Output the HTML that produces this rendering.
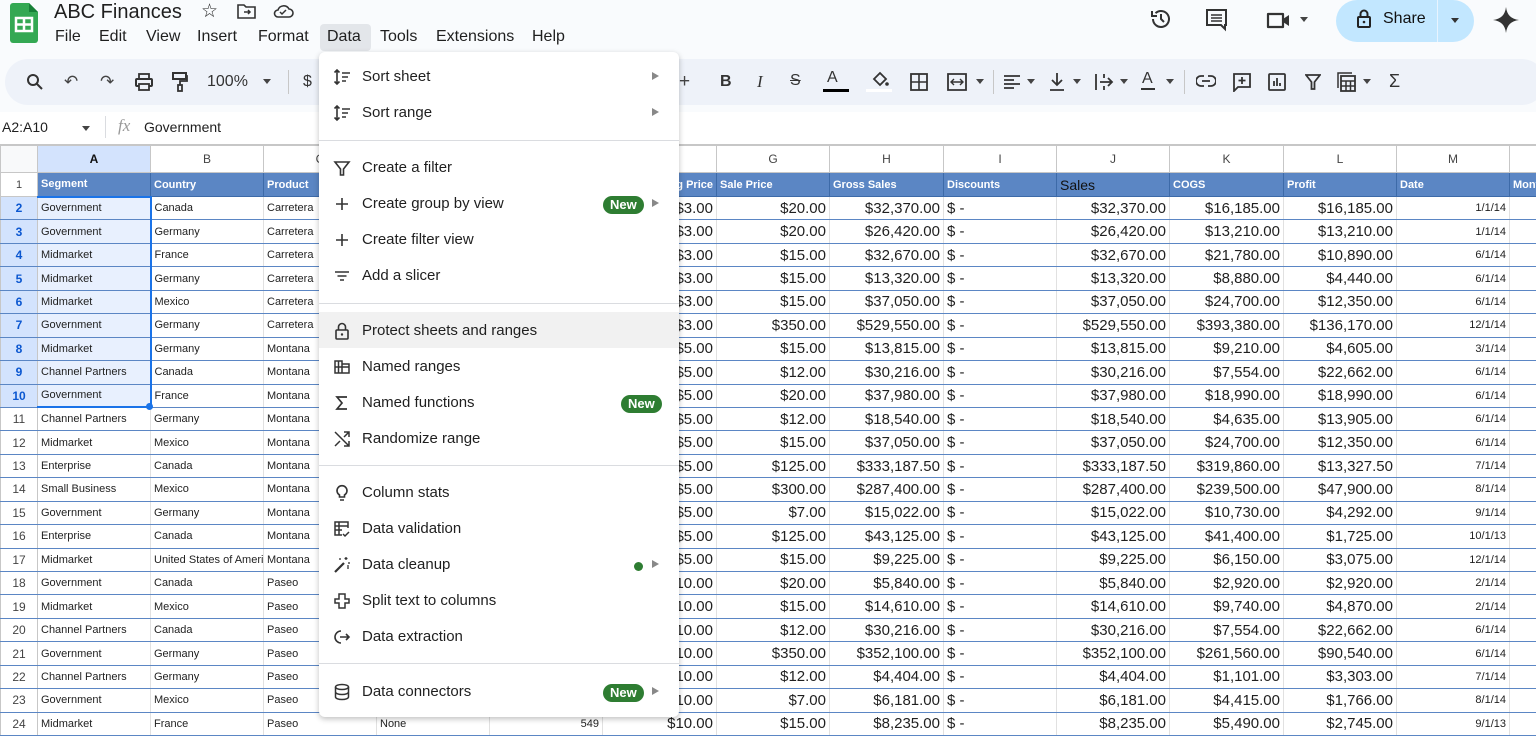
<!DOCTYPE html>
<html><head><meta charset="utf-8">
<style>
*{box-sizing:border-box;margin:0;padding:0}
body{width:1536px;height:730px;overflow:hidden;background:#f9fbfd;font-family:"Liberation Sans",Arial,sans-serif;color:#1f1f1f;position:relative}
.abs{position:absolute}
.tb{position:absolute;left:5px;top:59px;width:1540px;height:46px;background:#eef2f9;border-radius:23px}
.ic{position:absolute;font-size:17px;color:#444}
table{position:absolute;left:0;top:145px;width:1559px;border-collapse:collapse;table-layout:fixed;background:#fff}
td{border:1px solid #e1e1e1;height:23.45px;padding:0 3px;font-size:11px;white-space:nowrap;overflow:hidden}
tr.h td{height:27px;background:#fff;color:#444;text-align:center;font-size:12px;border-color:#c7c7c7}
tr.r1 td{height:24px;background:#5b86c4;color:#fff;font-weight:bold;font-size:11px;border-color:#3d6aa8}
tr.r1 td:first-child{background:#fff;color:#444;font-weight:normal;border-color:#c7c7c7}
td:first-child{text-align:center;color:#444;font-size:12px;background:#fff;border-color:#c7c7c7}
td.n{text-align:right;font-size:15px}
td.d{text-align:right}
tr.s td:first-child{background:#d3e3fd;font-weight:bold;color:#0b57d0}
tr.s td:nth-child(2){background:#e8f0fe;border-left:1px solid #1a73e8;border-right:2px solid #1a73e8}
tr.b td{border-bottom:1px solid #5b86c4}
#m{position:absolute;left:319px;top:52px;width:360px;height:665px;background:#fff;border-radius:6px;box-shadow:0 2px 6px rgba(0,0,0,.25)}
.it{position:absolute;left:0;width:360px;height:36px;font-size:15px;color:#1f1f1f}
.it .t{position:absolute;left:43px;top:10px}
.it .i{position:absolute;left:14px;top:10px;width:18px;height:18px}
.ar{position:absolute;left:333px;top:14px;width:0;height:0;border-left:7px solid #888;border-top:4.5px solid transparent;border-bottom:4.5px solid transparent}
.new{position:absolute;top:11px;height:18px;padding:0 7px;background:#2e7d32;color:#fff;font-weight:bold;font-size:13px;border-radius:9px;line-height:18px}
.sep{position:absolute;left:0;width:360px;height:1px;background:#dadce0}
</style></head><body>
<svg class="abs" style="left:10px;top:3px" width="28" height="40" viewBox="0 0 28 40"><path d="M3 0h16l9 9v28a3 3 0 0 1-3 3H3a3 3 0 0 1-3-3V3a3 3 0 0 1 3-3z" fill="#34a853"/><path d="M19 0v9h9z" fill="#188038"/><rect x="6" y="15" width="16" height="13" fill="none" stroke="#fff" stroke-width="2.5"/><path d="M6 21.5h16M14 15v13" stroke="#fff" stroke-width="2.5"/></svg>
<div class="abs" style="left:54px;top:1px;font-size:20px">ABC Finances</div>
<div class="abs" style="left:201px;top:0px;font-size:19px">☆</div>
<svg class="abs" style="left:237px;top:3px" width="20" height="16" viewBox="0 0 20 16"><path d="M1 2h6l2 2h9v11H1z" fill="none" stroke="#333" stroke-width="1.6"/><path d="M7 9h6M11 7l2 2-2 2" fill="none" stroke="#333" stroke-width="1.5"/></svg>
<svg class="abs" style="left:272px;top:3px" width="22" height="16" viewBox="0 0 22 16"><path d="M6 14h11a4 4 0 0 0 0-8 6 6 0 0 0-11 1 3.5 3.5 0 0 0 0 7z" fill="none" stroke="#333" stroke-width="1.6"/><path d="M8 9l2 2 4-4" fill="none" stroke="#333" stroke-width="1.5"/></svg>
<div class="abs" style="left:320px;top:24px;width:51px;height:27px;background:#e3e6ea;border-radius:4px"></div>
<div class="abs" style="top:28px;font-size:16px;left:55px">File</div>
<div class="abs" style="top:28px;font-size:16px;left:99px">Edit</div>
<div class="abs" style="top:28px;font-size:16px;left:146px">View</div>
<div class="abs" style="top:28px;font-size:16px;left:197px">Insert</div>
<div class="abs" style="top:28px;font-size:16px;left:258px">Format</div>
<div class="abs" style="top:28px;font-size:16px;left:327px">Data</div>
<div class="abs" style="top:28px;font-size:16px;left:380px">Tools</div>
<div class="abs" style="top:28px;font-size:16px;left:436px">Extensions</div>
<div class="abs" style="top:28px;font-size:16px;left:532px">Help</div>
<svg class="abs" style="left:1149px;top:7px" width="24" height="24" viewBox="0 0 24 24"><path d="M4 12a8 8 0 1 0 2.5-5.8" fill="none" stroke="#333" stroke-width="2"/><path d="M3 4v5h5" fill="none" stroke="#333" stroke-width="2"/><path d="M12 7v5l3 3" fill="none" stroke="#333" stroke-width="2"/></svg>
<svg class="abs" style="left:1205px;top:8px" width="24" height="24" viewBox="0 0 24 24"><path d="M2 2h19v15h-1v4l-4-4H2z" fill="none" stroke="#333" stroke-width="2"/><path d="M6 7h11M6 10h11M6 13h11" stroke="#333" stroke-width="1.6"/></svg>
<svg class="abs" style="left:1266px;top:11px" width="26" height="18" viewBox="0 0 26 18"><path d="M2 3h15v13H2z" fill="none" stroke="#333" stroke-width="2.2" stroke-linejoin="round"/><path d="M17 8l6-4v11l-6-4z" fill="#333"/></svg>
<div class="abs" style="left:1300px;top:17px;border-top:5px solid #444;border-left:4px solid transparent;border-right:4px solid transparent"></div>
<div class="abs" style="left:1336px;top:0;width:138px;height:42px;background:#c2e7ff;border-radius:21px"></div>
<div class="abs" style="left:1437px;top:0;width:1px;height:42px;background:#e8f4ff"></div>
<svg class="abs" style="left:1356px;top:9px" width="16" height="20" viewBox="0 0 16 20"><rect x="2" y="8" width="12" height="10" rx="1" fill="none" stroke="#222" stroke-width="2"/><path d="M4.5 8V5a3.5 3.5 0 0 1 7 0v3" fill="none" stroke="#222" stroke-width="2"/><circle cx="8" cy="13" r="1.3" fill="#222"/></svg>
<div class="abs" style="left:1383px;top:10px;font-size:16px;font-weight:500;color:#111">Share</div>
<div class="abs" style="left:1451px;top:18px;border-top:5px solid #333;border-left:4px solid transparent;border-right:4px solid transparent"></div>
<svg class="abs" style="left:1493px;top:7px" width="26" height="26" viewBox="0 0 26 26"><path d="M13 0C14 8 18 12 26 13 18 14 14 18 13 26 12 18 8 14 0 13 8 12 12 8 13 0z" fill="#333"/></svg>
<div class="tb"></div>
<svg class="abs" style="left:26px;top:73px" width="18" height="18" viewBox="0 0 18 18"><circle cx="7" cy="7" r="5" fill="none" stroke="#333" stroke-width="2"/><path d="M11 11l5 5" stroke="#333" stroke-width="2"/></svg>
<div class="ic" style="left:64px;top:72px">↶</div>
<div class="ic" style="left:100px;top:72px">↷</div>
<svg class="abs" style="left:135px;top:73px" width="18" height="18" viewBox="0 0 18 18"><rect x="1" y="6" width="16" height="7" rx="1" fill="none" stroke="#333" stroke-width="2"/><rect x="4" y="1" width="10" height="5" fill="none" stroke="#333" stroke-width="1.8"/><rect x="4" y="11" width="10" height="6" fill="#eef2f9" stroke="#333" stroke-width="1.8"/></svg>
<svg class="abs" style="left:172px;top:72px" width="16" height="20" viewBox="0 0 16 20"><rect x="1" y="1" width="13" height="6" fill="none" stroke="#333" stroke-width="2"/><path d="M14 4h1v5H8v4" fill="none" stroke="#333" stroke-width="1.8"/><rect x="6" y="13" width="4" height="6" fill="none" stroke="#333" stroke-width="1.8"/></svg>
<div class="abs" style="left:207px;top:73px;font-size:16px;color:#333">100%</div>
<div class="abs" style="left:263px;top:79px;border-top:5px solid #444;border-left:4px solid transparent;border-right:4px solid transparent"></div>
<div class="abs" style="left:288px;top:70px;width:1px;height:24px;background:#c7c7c7"></div>
<div class="abs" style="left:303px;top:73px;font-size:16px;color:#333">$</div>
<div class="abs" style="left:679px;top:71px;font-size:19px;color:#444">+</div>
<div class="abs" style="left:720px;top:73px;font-size:16px;font-weight:bold;color:#333">B</div>
<div class="abs" style="left:757px;top:72px;font-size:17px;font-style:italic;color:#333;font-family:'Liberation Serif',serif">I</div>
<div class="abs" style="left:790px;top:72px;font-size:16px;color:#333;text-decoration:line-through">S</div>
<div class="abs" style="left:827px;top:69px;font-size:16px;color:#333">A</div>
<div class="abs" style="left:823px;top:89px;width:26px;height:3px;background:#000"></div>
<svg class="abs" style="left:870px;top:70px" width="20" height="20" viewBox="0 0 20 20"><path d="M4 9l6-6 6 6-6 6z" fill="none" stroke="#333" stroke-width="1.8"/><circle cx="17" cy="14" r="1.8" fill="#333"/></svg>
<div class="abs" style="left:866px;top:89px;width:26px;height:3px;background:#fff"></div>
<svg class="abs" style="left:910px;top:73px" width="18" height="18" viewBox="0 0 18 18"><rect x="1" y="1" width="16" height="16" fill="none" stroke="#333" stroke-width="1.8"/><path d="M9 1v16M1 9h16" stroke="#333" stroke-width="1.6"/></svg>
<svg class="abs" style="left:947px;top:73px" width="20" height="18" viewBox="0 0 20 18"><path d="M1 1h18v16H1z" fill="none" stroke="#333" stroke-width="1.8"/><path d="M5 9h10M7 6l-3 3 3 3M13 6l3 3-3 3" fill="none" stroke="#333" stroke-width="1.4"/></svg>
<div class="abs" style="left:976px;top:79px;border-top:5px solid #444;border-left:4px solid transparent;border-right:4px solid transparent"></div>
<div class="abs" style="left:993px;top:70px;width:1px;height:24px;background:#c7c7c7"></div>
<svg class="abs" style="left:1003px;top:74px" width="18" height="16" viewBox="0 0 18 16"><path d="M1 2h16M1 6h10M1 10h16M1 14h10" stroke="#333" stroke-width="1.8"/></svg>
<div class="abs" style="left:1027px;top:79px;border-top:5px solid #444;border-left:4px solid transparent;border-right:4px solid transparent"></div>
<svg class="abs" style="left:1049px;top:72px" width="16" height="20" viewBox="0 0 16 20"><path d="M8 1v12M3 8l5 5 5-5M1 18h14" fill="none" stroke="#333" stroke-width="1.8"/></svg>
<div class="abs" style="left:1073px;top:79px;border-top:5px solid #444;border-left:4px solid transparent;border-right:4px solid transparent"></div>
<svg class="abs" style="left:1094px;top:73px" width="20" height="18" viewBox="0 0 20 18"><path d="M2 1v16M6 9h12M14 5l4 4-4 4M10 1v4M10 13v4" fill="none" stroke="#333" stroke-width="1.8"/></svg>
<div class="abs" style="left:1120px;top:79px;border-top:5px solid #444;border-left:4px solid transparent;border-right:4px solid transparent"></div>
<div class="abs" style="left:1142px;top:70px;font-size:16px;color:#333">A</div>
<div class="abs" style="left:1141px;top:88px;width:14px;height:2px;background:#333"></div>
<div class="abs" style="left:1166px;top:79px;border-top:5px solid #444;border-left:4px solid transparent;border-right:4px solid transparent"></div>
<div class="abs" style="left:1184px;top:70px;width:1px;height:24px;background:#c7c7c7"></div>
<svg class="abs" style="left:1196px;top:75px" width="20" height="12" viewBox="0 0 20 12"><path d="M8 1H5a5 5 0 0 0 0 10h3M12 1h3a5 5 0 0 1 0 10h-3M6 6h8" fill="none" stroke="#333" stroke-width="1.8"/></svg>
<svg class="abs" style="left:1232px;top:72px" width="20" height="20" viewBox="0 0 20 20"><path d="M2 2h16v13H6l-4 4z" fill="none" stroke="#333" stroke-width="1.8"/><path d="M10 5v7M6.5 8.5h7" stroke="#333" stroke-width="1.8"/></svg>
<svg class="abs" style="left:1268px;top:73px" width="18" height="18" viewBox="0 0 18 18"><rect x="1" y="1" width="16" height="16" rx="1" fill="none" stroke="#333" stroke-width="1.8"/><path d="M6 13V8M9 13V5M12 13v-3" stroke="#333" stroke-width="1.8"/></svg>
<svg class="abs" style="left:1305px;top:73px" width="16" height="18" viewBox="0 0 16 18"><path d="M1 2h14L9.5 9v7h-3V9z" fill="none" stroke="#333" stroke-width="1.8"/></svg>
<svg class="abs" style="left:1337px;top:72px" width="22" height="20" viewBox="0 0 22 20"><rect x="4" y="4" width="14" height="15" fill="none" stroke="#333" stroke-width="1.8"/><path d="M1 16V1h14M4 9h14M4 14h14M9 9v10M13.5 9v10" fill="none" stroke="#333" stroke-width="1.5"/></svg>
<div class="abs" style="left:1363px;top:79px;border-top:5px solid #444;border-left:4px solid transparent;border-right:4px solid transparent"></div>
<div class="abs" style="left:1389px;top:71px;font-size:18px;color:#333">Σ</div>
<div class="abs" style="left:0;top:112px;width:1536px;height:33px;background:#fff"></div>
<div class="abs" style="left:2px;top:119px;font-size:14px">A2:A10</div>
<div class="abs" style="left:82px;top:126px;border-top:5px solid #444;border-left:4px solid transparent;border-right:4px solid transparent"></div>
<div class="abs" style="left:105px;top:116px;width:1px;height:22px;background:#dadce0"></div>
<div class="abs" style="left:118px;top:116px;font-size:17px;font-style:italic;color:#999;font-family:'Liberation Serif',serif">fx</div>
<div class="abs" style="left:144px;top:119px;font-size:14px">Government</div>
<div class="abs" style="left:0;top:144px;width:1536px;height:1px;background:#c7c7c7"></div>
<table>
<colgroup><col style="width:37px"><col style="width:113px"><col style="width:113px"><col style="width:113px"><col style="width:113px"><col style="width:113px"><col style="width:114px"><col style="width:113px"><col style="width:114px"><col style="width:113px"><col style="width:113px"><col style="width:114px"><col style="width:113px"><col style="width:113px"><col style="width:50px"></colgroup>
<tr class="h"><td style="background:#f8f9fa"></td><td style="background:#d3e3fd;font-weight:bold;color:#111">A</td><td>B</td><td>C</td><td>D</td><td>E</td><td>F</td><td>G</td><td>H</td><td>I</td><td>J</td><td>K</td><td>L</td><td>M</td><td></td></tr>
<tr class="r1"><td>1</td><td>Segment</td><td>Country</td><td>Product</td><td></td><td></td><td style="text-align:right">Manufacturing Price</td><td>Sale Price</td><td>Gross Sales</td><td>Discounts</td><td style="font-weight:normal;font-size:14px;color:#111">Sales</td><td>COGS</td><td>Profit</td><td>Date</td><td>Month</td></tr>
<tr class="s b"><td>2</td><td style="border-top:2px solid #1a73e8">Government</td><td>Canada</td><td>Carretera</td><td></td><td></td><td class="n">$3.00</td><td class="n">$20.00</td><td class="n">$32,370.00</td><td class="n" style="text-align:left">$ -</td><td class="n">$32,370.00</td><td class="n">$16,185.00</td><td class="n">$16,185.00</td><td class="d">1/1/14</td><td></td></tr>
<tr class="s b"><td>3</td><td>Government</td><td>Germany</td><td>Carretera</td><td></td><td></td><td class="n">$3.00</td><td class="n">$20.00</td><td class="n">$26,420.00</td><td class="n" style="text-align:left">$ -</td><td class="n">$26,420.00</td><td class="n">$13,210.00</td><td class="n">$13,210.00</td><td class="d">1/1/14</td><td></td></tr>
<tr class="s b"><td>4</td><td>Midmarket</td><td>France</td><td>Carretera</td><td></td><td></td><td class="n">$3.00</td><td class="n">$15.00</td><td class="n">$32,670.00</td><td class="n" style="text-align:left">$ -</td><td class="n">$32,670.00</td><td class="n">$21,780.00</td><td class="n">$10,890.00</td><td class="d">6/1/14</td><td></td></tr>
<tr class="s b"><td>5</td><td>Midmarket</td><td>Germany</td><td>Carretera</td><td></td><td></td><td class="n">$3.00</td><td class="n">$15.00</td><td class="n">$13,320.00</td><td class="n" style="text-align:left">$ -</td><td class="n">$13,320.00</td><td class="n">$8,880.00</td><td class="n">$4,440.00</td><td class="d">6/1/14</td><td></td></tr>
<tr class="s b"><td>6</td><td>Midmarket</td><td>Mexico</td><td>Carretera</td><td></td><td></td><td class="n">$3.00</td><td class="n">$15.00</td><td class="n">$37,050.00</td><td class="n" style="text-align:left">$ -</td><td class="n">$37,050.00</td><td class="n">$24,700.00</td><td class="n">$12,350.00</td><td class="d">6/1/14</td><td></td></tr>
<tr class="s b"><td>7</td><td>Government</td><td>Germany</td><td>Carretera</td><td></td><td></td><td class="n">$3.00</td><td class="n">$350.00</td><td class="n">$529,550.00</td><td class="n" style="text-align:left">$ -</td><td class="n">$529,550.00</td><td class="n">$393,380.00</td><td class="n">$136,170.00</td><td class="d">12/1/14</td><td></td></tr>
<tr class="s b"><td>8</td><td>Midmarket</td><td>Germany</td><td>Montana</td><td></td><td></td><td class="n">$5.00</td><td class="n">$15.00</td><td class="n">$13,815.00</td><td class="n" style="text-align:left">$ -</td><td class="n">$13,815.00</td><td class="n">$9,210.00</td><td class="n">$4,605.00</td><td class="d">3/1/14</td><td></td></tr>
<tr class="s b"><td>9</td><td>Channel Partners</td><td>Canada</td><td>Montana</td><td></td><td></td><td class="n">$5.00</td><td class="n">$12.00</td><td class="n">$30,216.00</td><td class="n" style="text-align:left">$ -</td><td class="n">$30,216.00</td><td class="n">$7,554.00</td><td class="n">$22,662.00</td><td class="d">6/1/14</td><td></td></tr>
<tr class="s b"><td>10</td><td style="border-bottom:2px solid #1a73e8">Government</td><td>France</td><td>Montana</td><td></td><td></td><td class="n">$5.00</td><td class="n">$20.00</td><td class="n">$37,980.00</td><td class="n" style="text-align:left">$ -</td><td class="n">$37,980.00</td><td class="n">$18,990.00</td><td class="n">$18,990.00</td><td class="d">6/1/14</td><td></td></tr>
<tr class="b"><td>11</td><td>Channel Partners</td><td>Germany</td><td>Montana</td><td></td><td></td><td class="n">$5.00</td><td class="n">$12.00</td><td class="n">$18,540.00</td><td class="n" style="text-align:left">$ -</td><td class="n">$18,540.00</td><td class="n">$4,635.00</td><td class="n">$13,905.00</td><td class="d">6/1/14</td><td></td></tr>
<tr class="b"><td>12</td><td>Midmarket</td><td>Mexico</td><td>Montana</td><td></td><td></td><td class="n">$5.00</td><td class="n">$15.00</td><td class="n">$37,050.00</td><td class="n" style="text-align:left">$ -</td><td class="n">$37,050.00</td><td class="n">$24,700.00</td><td class="n">$12,350.00</td><td class="d">6/1/14</td><td></td></tr>
<tr class="b"><td>13</td><td>Enterprise</td><td>Canada</td><td>Montana</td><td></td><td></td><td class="n">$5.00</td><td class="n">$125.00</td><td class="n">$333,187.50</td><td class="n" style="text-align:left">$ -</td><td class="n">$333,187.50</td><td class="n">$319,860.00</td><td class="n">$13,327.50</td><td class="d">7/1/14</td><td></td></tr>
<tr class="b"><td>14</td><td>Small Business</td><td>Mexico</td><td>Montana</td><td></td><td></td><td class="n">$5.00</td><td class="n">$300.00</td><td class="n">$287,400.00</td><td class="n" style="text-align:left">$ -</td><td class="n">$287,400.00</td><td class="n">$239,500.00</td><td class="n">$47,900.00</td><td class="d">8/1/14</td><td></td></tr>
<tr class="b"><td>15</td><td>Government</td><td>Germany</td><td>Montana</td><td></td><td></td><td class="n">$5.00</td><td class="n">$7.00</td><td class="n">$15,022.00</td><td class="n" style="text-align:left">$ -</td><td class="n">$15,022.00</td><td class="n">$10,730.00</td><td class="n">$4,292.00</td><td class="d">9/1/14</td><td></td></tr>
<tr class="b"><td>16</td><td>Enterprise</td><td>Canada</td><td>Montana</td><td></td><td></td><td class="n">$5.00</td><td class="n">$125.00</td><td class="n">$43,125.00</td><td class="n" style="text-align:left">$ -</td><td class="n">$43,125.00</td><td class="n">$41,400.00</td><td class="n">$1,725.00</td><td class="d">10/1/13</td><td></td></tr>
<tr class="b"><td>17</td><td>Midmarket</td><td>United States of America</td><td>Montana</td><td></td><td></td><td class="n">$5.00</td><td class="n">$15.00</td><td class="n">$9,225.00</td><td class="n" style="text-align:left">$ -</td><td class="n">$9,225.00</td><td class="n">$6,150.00</td><td class="n">$3,075.00</td><td class="d">12/1/14</td><td></td></tr>
<tr class="b"><td>18</td><td>Government</td><td>Canada</td><td>Paseo</td><td></td><td></td><td class="n">$10.00</td><td class="n">$20.00</td><td class="n">$5,840.00</td><td class="n" style="text-align:left">$ -</td><td class="n">$5,840.00</td><td class="n">$2,920.00</td><td class="n">$2,920.00</td><td class="d">2/1/14</td><td></td></tr>
<tr class="b"><td>19</td><td>Midmarket</td><td>Mexico</td><td>Paseo</td><td></td><td></td><td class="n">$10.00</td><td class="n">$15.00</td><td class="n">$14,610.00</td><td class="n" style="text-align:left">$ -</td><td class="n">$14,610.00</td><td class="n">$9,740.00</td><td class="n">$4,870.00</td><td class="d">2/1/14</td><td></td></tr>
<tr class="b"><td>20</td><td>Channel Partners</td><td>Canada</td><td>Paseo</td><td></td><td></td><td class="n">$10.00</td><td class="n">$12.00</td><td class="n">$30,216.00</td><td class="n" style="text-align:left">$ -</td><td class="n">$30,216.00</td><td class="n">$7,554.00</td><td class="n">$22,662.00</td><td class="d">6/1/14</td><td></td></tr>
<tr class="b"><td>21</td><td>Government</td><td>Germany</td><td>Paseo</td><td></td><td></td><td class="n">$10.00</td><td class="n">$350.00</td><td class="n">$352,100.00</td><td class="n" style="text-align:left">$ -</td><td class="n">$352,100.00</td><td class="n">$261,560.00</td><td class="n">$90,540.00</td><td class="d">6/1/14</td><td></td></tr>
<tr class="b"><td>22</td><td>Channel Partners</td><td>Germany</td><td>Paseo</td><td></td><td></td><td class="n">$10.00</td><td class="n">$12.00</td><td class="n">$4,404.00</td><td class="n" style="text-align:left">$ -</td><td class="n">$4,404.00</td><td class="n">$1,101.00</td><td class="n">$3,303.00</td><td class="d">7/1/14</td><td></td></tr>
<tr class="b"><td>23</td><td>Government</td><td>Mexico</td><td>Paseo</td><td></td><td></td><td class="n">$10.00</td><td class="n">$7.00</td><td class="n">$6,181.00</td><td class="n" style="text-align:left">$ -</td><td class="n">$6,181.00</td><td class="n">$4,415.00</td><td class="n">$1,766.00</td><td class="d">8/1/14</td><td></td></tr>
<tr class="b"><td>24</td><td>Midmarket</td><td>France</td><td>Paseo</td><td>None</td><td class="d">549</td><td class="n">$10.00</td><td class="n">$15.00</td><td class="n">$8,235.00</td><td class="n" style="text-align:left">$ -</td><td class="n">$8,235.00</td><td class="n">$5,490.00</td><td class="n">$2,745.00</td><td class="d">9/1/13</td><td></td></tr>
</table>
<div class="abs" style="left:146px;top:403px;width:7px;height:7px;border-radius:50%;background:#1a73e8"></div>
<div id="m">
<div class="it" style="top:6px"><svg class="i" viewBox="0 0 18 18"><path d="M4 2v14M1.5 4.5L4 2l2.5 2.5M1.5 13.5L4 16l2.5-2.5M9 5h8M9 9h6M9 13h4" fill="none" stroke="#333" stroke-width="1.6"/></svg><span class="t">Sort sheet</span><div class="ar"></div></div>
<div class="it" style="top:42px"><svg class="i" viewBox="0 0 18 18"><path d="M4 2v14M1.5 4.5L4 2l2.5 2.5M1.5 13.5L4 16l2.5-2.5M9 5h8M9 9h6M9 13h4" fill="none" stroke="#333" stroke-width="1.6"/></svg><span class="t">Sort range</span><div class="ar"></div></div>
<div class="sep" style="top:88px"></div>
<div class="it" style="top:97px"><svg class="i" viewBox="0 0 18 18"><path d="M2 3h14L10.5 10v6h-3v-6z" fill="none" stroke="#333" stroke-width="1.6"/></svg><span class="t">Create a filter</span></div>
<div class="it" style="top:133px"><svg class="i" viewBox="0 0 18 18"><path d="M9 3v12M3 9h12" stroke="#333" stroke-width="1.6"/></svg><span class="t">Create group by view</span><div class="new" style="left:284px">New</div><div class="ar"></div></div>
<div class="it" style="top:169px"><svg class="i" viewBox="0 0 18 18"><path d="M9 3v12M3 9h12" stroke="#333" stroke-width="1.6"/></svg><span class="t">Create filter view</span></div>
<div class="it" style="top:205px"><svg class="i" viewBox="0 0 18 18"><path d="M2 5h14M4.5 9h9M7 13h4" stroke="#333" stroke-width="1.6"/></svg><span class="t">Add a slicer</span></div>
<div class="sep" style="top:251px"></div>
<div class="it" style="top:260px;background:#f1f1f1"><svg class="i" viewBox="0 0 18 18"><rect x="3" y="8" width="12" height="9" rx="1" fill="none" stroke="#333" stroke-width="1.6"/><path d="M5.5 8V5a3.5 3.5 0 0 1 7 0v3" fill="none" stroke="#333" stroke-width="1.6"/><circle cx="9" cy="12.5" r="1.2" fill="#333"/></svg><span class="t">Protect sheets and ranges</span></div>
<div class="it" style="top:296px"><svg class="i" viewBox="0 0 18 18"><path d="M2 3h7v12H2zM9 6h7v9H9zM2 9h14M5.5 3v12" fill="none" stroke="#333" stroke-width="1.5"/></svg><span class="t">Named ranges</span></div>
<div class="it" style="top:332px"><svg class="i" viewBox="0 0 18 18"><path d="M14 3H4l5 6-5 6h10" fill="none" stroke="#333" stroke-width="1.7"/></svg><span class="t">Named functions</span><div class="new" style="left:302px">New</div></div>
<div class="it" style="top:368px"><svg class="i" viewBox="0 0 18 18"><path d="M2 2l14 14M11 16h5v-5M11 2h5v5M16 2l-5 5M2 16l5-5" fill="none" stroke="#333" stroke-width="1.5"/></svg><span class="t">Randomize range</span></div>
<div class="sep" style="top:413px"></div>
<div class="it" style="top:422px"><svg class="i" viewBox="0 0 18 18"><path d="M6.5 13v-2a5 5 0 1 1 5 0v2zM7 16h4" fill="none" stroke="#333" stroke-width="1.6"/></svg><span class="t">Column stats</span></div>
<div class="it" style="top:458px"><svg class="i" viewBox="0 0 18 18"><path d="M9 15H2V2h13v6M2 6h13M2 10h7M6 2v13M10 14l2 2 4-4" fill="none" stroke="#333" stroke-width="1.5"/></svg><span class="t">Data validation</span></div>
<div class="it" style="top:494px"><svg class="i" viewBox="0 0 18 18"><path d="M2 16l9-9" stroke="#333" stroke-width="2.2"/><path d="M13 1v3M11.5 2.5h3M16 6v2M7 2v2M15 11v2M14 10h2" stroke="#333" stroke-width="1.3"/></svg><span class="t">Data cleanup</span><div class="abs" style="left:315px;top:16px;width:9px;height:9px;border-radius:50%;background:#2e7d32"></div><div class="ar"></div></div>
<div class="it" style="top:530px"><svg class="i" viewBox="0 0 18 18"><path d="M6 2h6v5h4v4h-4v5H6v-5H2V7h4z" fill="none" stroke="#333" stroke-width="1.5"/></svg><span class="t">Split text to columns</span></div>
<div class="it" style="top:566px"><svg class="i" viewBox="0 0 18 18"><path d="M8 3a6 6 0 1 0 0 12M7 9h9M13 6l3 3-3 3" fill="none" stroke="#333" stroke-width="1.6"/></svg><span class="t">Data extraction</span></div>
<div class="sep" style="top:611px"></div>
<div class="it" style="top:621px"><svg class="i" viewBox="0 0 18 18"><ellipse cx="9" cy="4" rx="6.5" ry="2.5" fill="none" stroke="#333" stroke-width="1.5"/><path d="M2.5 4v10c0 1.4 2.9 2.5 6.5 2.5s6.5-1.1 6.5-2.5V4M2.5 9c0 1.4 2.9 2.5 6.5 2.5s6.5-1.1 6.5-2.5" fill="none" stroke="#333" stroke-width="1.5"/></svg><span class="t">Data connectors</span><div class="new" style="left:284px">New</div><div class="ar"></div></div>
</div>
</body></html>
